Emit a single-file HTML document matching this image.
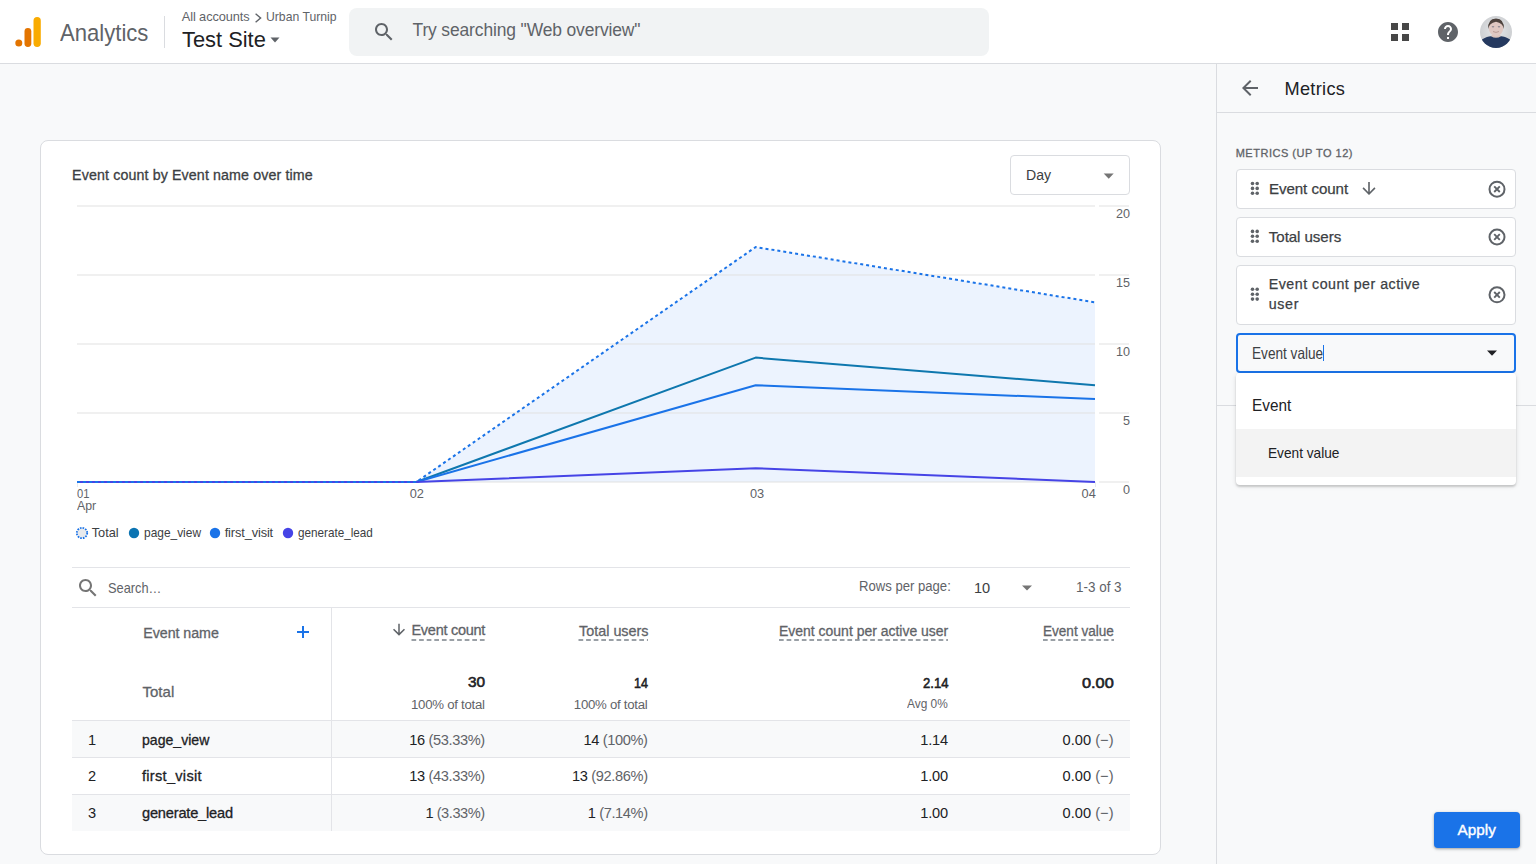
<!DOCTYPE html>
<html><head><meta charset="utf-8"><title>Analytics</title>
<style>
html,body{margin:0;padding:0;width:1536px;height:864px;overflow:hidden;background:#f8f9fa;font-family:"Liberation Sans",sans-serif;}
.a{position:absolute;box-sizing:border-box}
.t{position:absolute;line-height:1;white-space:pre;font-family:"Liberation Sans",sans-serif}
svg{position:absolute;left:0;top:0}
</style></head><body>
<!-- header -->
<div class="a" style="left:0;top:0;width:1536px;height:64px;background:#fff;border-bottom:1px solid #dadce0"></div>
<div class="a" style="left:164px;top:16px;width:1px;height:32px;background:#dadce0"></div>
<div class="a" style="left:349px;top:8px;width:640px;height:48px;background:#f1f3f4;border-radius:8px"></div>

<!-- chart card -->
<div class="a" style="left:40px;top:140px;width:1121px;height:715px;background:#fff;border:1px solid #dadce0;border-radius:8px"></div>
<div class="a" style="left:1010px;top:155px;width:120px;height:40px;border:1px solid #dadce0;border-radius:4px"></div>

<!-- table -->
<div class="a" style="left:72px;top:567px;width:1058px;height:1px;background:#e3e4e8"></div>
<div class="a" style="left:72px;top:607px;width:1058px;height:1px;background:#e3e4e8"></div>
<div class="a" style="left:72px;top:720px;width:1058px;height:1px;background:#e3e4e8"></div>
<div class="a" style="left:72px;top:721px;width:1058px;height:36px;background:#f8f9fa"></div>
<div class="a" style="left:72px;top:757px;width:1058px;height:1px;background:#e3e4e8"></div>
<div class="a" style="left:72px;top:794px;width:1058px;height:1px;background:#e3e4e8"></div>
<div class="a" style="left:72px;top:795px;width:1058px;height:36px;background:#f8f9fa"></div>
<div class="a" style="left:331px;top:608px;width:1px;height:223px;background:#e3e4e8"></div>

<!-- right panel -->
<div class="a" style="left:1216px;top:64px;width:320px;height:800px;background:#f8f9fa;border-left:1px solid #dadce0"></div>
<div class="a" style="left:1217px;top:112px;width:319px;height:1px;background:#dadce0"></div>
<div class="a" style="left:1217px;top:405px;width:319px;height:1px;background:#dadce0"></div>
<div class="a" style="left:1236px;top:169px;width:280px;height:40px;background:#fff;border:1px solid #dadce0;border-radius:4px"></div>
<div class="a" style="left:1236px;top:217px;width:280px;height:40px;background:#fff;border:1px solid #dadce0;border-radius:4px"></div>
<div class="a" style="left:1236px;top:265px;width:280px;height:60px;background:#fff;border:1px solid #dadce0;border-radius:4px"></div>
<div class="a" style="left:1236px;top:333px;width:280px;height:40px;background:#f8f9fa;border:2px solid #1a73e8;border-radius:4px"></div>
<div class="a" style="left:1236px;top:373px;width:280px;height:112px;background:#fff;border-radius:4px;box-shadow:0 2px 2px rgba(0,0,0,.14),0 1px 5px rgba(0,0,0,.12)"></div>
<div class="a" style="left:1236px;top:429px;width:280px;height:48px;background:#f3f3f3"></div>
<div class="a" style="left:1323px;top:345px;width:1px;height:16px;background:#1a73e8"></div>
<div class="a" style="left:1434px;top:812px;width:86px;height:36px;background:#1a73e8;border-radius:4px;box-shadow:0 1px 2px rgba(60,64,67,.3),0 1px 3px 1px rgba(60,64,67,.15)"></div>

<svg width="1536" height="864" viewBox="0 0 1536 864">
<rect x="33.5" y="17" width="7.3" height="30" rx="3.65" fill="#f9ab00"/>
<rect x="24.5" y="28" width="6.8" height="19" rx="3.4" fill="#e37400"/>
<circle cx="18.8" cy="43" r="3.5" fill="#e37400"/>
<polyline points="255.6,13.8 260.6,18 255.6,22.3" fill="none" stroke="#5f6368" stroke-width="1.4"/>
<polygon points="270.5,37.5 279.5,37.5 275,42.5" fill="#5f6368"/>
<g transform="translate(372,20)" fill="#5f6368"><path d="M15.5 14h-.79l-.28-.27C15.41 12.59 16 11.11 16 9.5 16 5.91 13.09 3 9.5 3S3 5.91 3 9.5 5.91 16 9.5 16c1.61 0 3.09-.59 4.23-1.57l.27.28v.79l5 4.99L20.49 19l-4.99-5zm-6 0C7.01 14 5 11.99 5 9.5S7.01 5 9.5 5 14 7.01 14 9.5 11.99 14 9.5 14z"/></g>
<g fill="#474747"><rect x="1391" y="23" width="7" height="7"/><rect x="1402" y="23" width="7" height="7"/><rect x="1391" y="34" width="7" height="7"/><rect x="1402" y="34" width="7" height="7"/></g>
<g transform="translate(1436,20)" fill="#5f6368"><path d="M12 2C6.48 2 2 6.48 2 12s4.48 10 10 10 10-4.48 10-10S17.52 2 12 2zm1 17h-2v-2h2v2zm2.07-7.75l-.9.92C13.45 12.9 13 13.5 13 15h-2v-.5c0-1.1.45-2.1 1.17-2.830l1.24-1.26c.37-.36.59-.86.59-1.410 0-1.1-.9-2-2-2s-2 .9-2 2H8c0-2.21 1.79-4 4-4s4 1.79 4 4c0 .88-.36 1.68-.93 2.25z"/></g>
<defs><clipPath id="av"><circle cx="1496" cy="32" r="16"/></clipPath>
<radialGradient id="avbg" cx="0.5" cy="0.45" r="0.6"><stop offset="0" stop-color="#e6e8ea"/><stop offset="1" stop-color="#c9cbce"/></radialGradient></defs>
<g clip-path="url(#av)">
<rect x="1480" y="16" width="32" height="32" fill="url(#avbg)"/>
<path d="M1491.5 35 h9 v5 h-9z" fill="#dcc3bb"/>
<ellipse cx="1496" cy="28" rx="7.3" ry="8.3" fill="#e0c8c2"/>
<path d="M1488.3 29 q-1-10 7.7-10.5 q8.7 0.5 7.7 10.5 q-0.6-6-7.7-7.2 q-7.1 1.2-7.7 7.2z" fill="#4e433e"/>
<ellipse cx="1493" cy="26.8" rx="1.3" ry="0.8" fill="#8f8a95"/>
<ellipse cx="1499" cy="26.8" rx="1.3" ry="0.8" fill="#8f8a95"/>
<path d="M1493 31.5 q3 1.8 6 0" stroke="#b08e88" stroke-width="0.8" fill="none"/>
<path d="M1480 50 L1482 39.5 q6-3.5 9-3.3 q5 3 10 0 q3 -0.2 9 3.3 L1512 50z" fill="#25395f"/>
</g>
<line x1="77.5" y1="482" x2="77.5" y2="487" stroke="#e8eaed"/>
<line x1="1095.5" y1="482" x2="1095.5" y2="487" stroke="#e8eaed"/>
<polygon points="77.00,482.00 416.33,482.00 755.67,247.06 1095.00,302.34 1095,482.00 77,482.00" fill="#ecf3fe"/>
<g stroke="#e1e1e1" stroke-width="1"><line x1="77" y1="206.0" x2="1095" y2="206.0"/><line x1="1099" y1="206.0" x2="1129" y2="206.0"/><line x1="77" y1="275.0" x2="1095" y2="275.0"/><line x1="1099" y1="275.0" x2="1129" y2="275.0"/><line x1="77" y1="344.0" x2="1095" y2="344.0"/><line x1="1099" y1="344.0" x2="1129" y2="344.0"/><line x1="77" y1="413.0" x2="1095" y2="413.0"/><line x1="1099" y1="413.0" x2="1129" y2="413.0"/><line x1="77" y1="482.0" x2="1095" y2="482.0"/><line x1="1099" y1="482.0" x2="1129" y2="482.0"/></g>
<g fill="none" stroke-width="2" stroke-linejoin="round">
<polyline points="77.00,482.00 416.33,482.00 755.67,357.62 1095.00,385.26" stroke="#0e77ae"/>
<polyline points="77.00,482.00 416.33,482.00 755.67,385.26 1095.00,399.08" stroke="#1a73e8"/>
<polyline points="77.00,482.00 416.33,482.00 755.67,468.18 1095.00,482.00" stroke="#4644e6"/>
<polyline points="77.00,482.00 416.33,482.00 755.67,247.06 1095.00,302.34" stroke="#1a73e8" stroke-dasharray="3 3"/>
</g>
<circle cx="82" cy="533" r="5.2" fill="#e8eaed" stroke="#1a73e8" stroke-width="1.8" stroke-dasharray="1.6 1.12"/>
<circle cx="134" cy="533" r="5.2" fill="#0b74b2"/>
<circle cx="215" cy="533" r="5.2" fill="#1a73e8"/>
<circle cx="288" cy="533" r="5.2" fill="#4644e6"/>
<polygon points="1103.7,173.5 1113.7,173.5 1108.7,178.7" fill="#757575"/>
<g transform="translate(76,576)" fill="#757575"><path d="M15.5 14h-.79l-.28-.27C15.41 12.59 16 11.11 16 9.5 16 5.91 13.09 3 9.5 3S3 5.91 3 9.5 5.91 16 9.5 16c1.61 0 3.09-.59 4.23-1.57l.27.28v.79l5 4.99L20.49 19l-4.99-5zm-6 0C7.01 14 5 11.99 5 9.5S7.01 5 9.5 5 14 7.01 14 9.5 11.99 14 9.5 14z"/></g>
<polygon points="1022,585.5 1032,585.5 1027,590.5" fill="#757575"/>
<path d="M297 632 h12 M303 626 v12" stroke="#1a73e8" stroke-width="2"/>
<g transform="translate(390,620.7) scale(0.75)" fill="#5f6368"><path d="M20 12l-1.41-1.41L13 16.17V4h-2v12.17l-5.58-5.59L4 12l8 8 8-8z"/></g>
<g stroke="#9aa0a6" stroke-width="2" stroke-dasharray="4.7 2.9">
<line x1="411.5" y1="640" x2="485" y2="640"/>
<line x1="578.5" y1="640" x2="648" y2="640"/>
<line x1="779" y1="640" x2="948" y2="640"/>
<line x1="1043" y1="640" x2="1114" y2="640"/>
</g>
<g transform="translate(1238,76)" fill="#5f6368"><path d="M20 11H7.83l5.59-5.59L12 4l-8 8 8 8 1.41-1.41L7.83 13H20v-2z"/></g>
<g fill="#5f6368"><circle cx="1252.5" cy="183.5" r="1.8"/><circle cx="1252.5" cy="188.4" r="1.8"/><circle cx="1252.5" cy="193.3" r="1.8"/><circle cx="1257.2" cy="183.5" r="1.8"/><circle cx="1257.2" cy="188.4" r="1.8"/><circle cx="1257.2" cy="193.3" r="1.8"/><circle cx="1252.5" cy="231.4" r="1.8"/><circle cx="1252.5" cy="236.3" r="1.8"/><circle cx="1252.5" cy="241.2" r="1.8"/><circle cx="1257.2" cy="231.4" r="1.8"/><circle cx="1257.2" cy="236.3" r="1.8"/><circle cx="1257.2" cy="241.2" r="1.8"/><circle cx="1252.5" cy="289.3" r="1.8"/><circle cx="1252.5" cy="294.2" r="1.8"/><circle cx="1252.5" cy="299.1" r="1.8"/><circle cx="1257.2" cy="289.3" r="1.8"/><circle cx="1257.2" cy="294.2" r="1.8"/><circle cx="1257.2" cy="299.1" r="1.8"/></g>
<g transform="translate(1359.25,178.75) scale(0.8125)" fill="#5f6368"><path d="M20 12l-1.41-1.41L13 16.17V4h-2v12.17l-5.58-5.59L4 12l8 8 8-8z"/></g>
<circle cx="1497" cy="189.2" r="7.5" fill="none" stroke="#5f6368" stroke-width="2"/><path d="M1494.2 186.4 l5.6 5.6 M1499.8 186.4 l-5.6 5.6" stroke="#5f6368" stroke-width="1.9" fill="none"/><circle cx="1497" cy="237" r="7.5" fill="none" stroke="#5f6368" stroke-width="2"/><path d="M1494.2 234.2 l5.6 5.6 M1499.8 234.2 l-5.6 5.6" stroke="#5f6368" stroke-width="1.9" fill="none"/><circle cx="1497" cy="294.8" r="7.5" fill="none" stroke="#5f6368" stroke-width="2"/><path d="M1494.2 292.0 l5.6 5.6 M1499.8 292.0 l-5.6 5.6" stroke="#5f6368" stroke-width="1.9" fill="none"/>
<polygon points="1487,350.5 1497,350.5 1492,355.7" fill="#202124"/>
</svg>
<div class='t' style='left:60.10px;top:21.56px;font-size:23.26px;color:#5f6368;transform:scaleX(0.9501);transform-origin:0 0'>Analytics</div>
<div class='t' style='left:181.70px;top:11.22px;font-size:12.79px;color:#5f6368;letter-spacing:-0.084px'>All accounts</div>
<div class='t' style='left:266.00px;top:11.22px;font-size:12.79px;color:#5f6368;transform:scaleX(0.9541);transform-origin:0 0'>Urban Turnip</div>
<div class='t' style='left:181.90px;top:28.16px;font-size:22.67px;color:#202124;transform:scaleX(0.9644);transform-origin:0 0'>Test Site</div>
<div class='t' style='left:412.50px;top:22.19px;font-size:17.44px;color:#5f6368;letter-spacing:-0.126px'>Try searching &quot;Web overview&quot;</div>
<div class='t' style='left:72.10px;top:167.59px;font-size:14.24px;color:#3c4043;letter-spacing:0.117px;-webkit-text-stroke:0.3px #3c4043'>Event count by Event name over time</div>
<div class='t' style='left:1025.50px;top:167.70px;font-size:14.83px;color:#3c4043;transform:scaleX(0.9490);transform-origin:0 0'>Day</div>
<div class='t' style='left:1116.08px;top:208.45px;font-size:12.60px;color:#5f6368'>20</div>
<div class='t' style='left:1116.08px;top:277.45px;font-size:12.60px;color:#5f6368'>15</div>
<div class='t' style='left:1116.08px;top:346.45px;font-size:12.60px;color:#5f6368'>10</div>
<div class='t' style='left:1123.08px;top:415.45px;font-size:12.60px;color:#5f6368'>5</div>
<div class='t' style='left:1123.08px;top:484.45px;font-size:12.60px;color:#5f6368'>0</div>
<div class='t' style='left:77.10px;top:488.02px;font-size:12.79px;color:#5f6368;transform:scaleX(0.8721);transform-origin:0 0'>01</div>
<div class='t' style='left:77.10px;top:499.92px;font-size:12.79px;color:#5f6368;transform:scaleX(0.9653);transform-origin:0 0'>Apr</div>
<div class='t' style='left:409.80px;top:488.02px;font-size:12.79px;color:#5f6368;letter-spacing:-0.219px'>02</div>
<div class='t' style='left:750.00px;top:488.02px;font-size:12.79px;color:#5f6368;letter-spacing:-0.219px'>03</div>
<div class='t' style='left:1081.50px;top:488.02px;font-size:12.79px;color:#5f6368;letter-spacing:0.081px'>04</div>
<div class='t' style='left:91.70px;top:526.62px;font-size:12.79px;color:#3c4043'>Total</div>
<div class='t' style='left:143.50px;top:526.62px;font-size:12.79px;color:#3c4043;transform:scaleX(0.9325);transform-origin:0 0'>page_view</div>
<div class='t' style='left:224.70px;top:526.62px;font-size:12.79px;color:#3c4043;letter-spacing:-0.122px'>first_visit</div>
<div class='t' style='left:298.00px;top:526.62px;font-size:12.79px;color:#3c4043;transform:scaleX(0.9152);transform-origin:0 0'>generate_lead</div>
<div class='t' style='left:107.60px;top:580.25px;font-size:15.12px;color:#5f6368;transform:scaleX(0.8478);transform-origin:0 0'>Search…</div>
<div class='t' style='left:859.00px;top:579.19px;font-size:14.24px;color:#5f6368;transform:scaleX(0.9207);transform-origin:0 0'>Rows per page:</div>
<div class='t' style='left:974.30px;top:580.03px;font-size:15.26px;color:#3c4043;transform:scaleX(0.9547);transform-origin:0 0'>10</div>
<div class='t' style='left:1076.14px;top:579.79px;font-size:14.24px;color:#5f6368;transform:scaleX(0.9445);transform-origin:0 0'>1-3 of 3</div>
<div class='t' style='left:143.30px;top:625.79px;font-size:14.24px;color:#5f6368;letter-spacing:-0.047px;-webkit-text-stroke:0.3px #5f6368'>Event name</div>
<div class='t' style='left:411.45px;top:623.35px;font-size:14.53px;color:#5f6368;letter-spacing:-0.272px;-webkit-text-stroke:0.3px #5f6368'>Event count</div>
<div class='t' style='left:578.80px;top:622.85px;font-size:15.12px;color:#5f6368;-webkit-text-stroke:0.3px #5f6368;transform:scaleX(0.9519);transform-origin:0 0'>Total users</div>
<div class='t' style='left:778.80px;top:623.62px;font-size:14.68px;color:#5f6368;-webkit-text-stroke:0.3px #5f6368;transform:scaleX(0.9519);transform-origin:0 0'>Event count per active user</div>
<div class='t' style='left:1042.87px;top:623.62px;font-size:14.68px;color:#5f6368;-webkit-text-stroke:0.3px #5f6368;transform:scaleX(0.9241);transform-origin:0 0'>Event value</div>
<div class='t' style='left:142.40px;top:684.68px;font-size:14.97px;color:#5f6368;letter-spacing:0.056px;-webkit-text-stroke:0.3px #5f6368'>Total</div>
<div class='t' style='left:468.43px;top:675.84px;font-size:13.95px;color:#202124;-webkit-text-stroke:0.55px #202124;transform:scaleX(1.1005);transform-origin:0 0'>30</div>
<div class='t' style='left:633.81px;top:675.69px;font-size:14.24px;color:#202124;-webkit-text-stroke:0.55px #202124;transform:scaleX(0.8821);transform-origin:0 0'>14</div>
<div class='t' style='left:922.54px;top:675.99px;font-size:14.24px;color:#202124;-webkit-text-stroke:0.55px #202124;transform:scaleX(0.9191);transform-origin:0 0'>2.14</div>
<div class='t' style='left:1082.17px;top:675.99px;font-size:14.24px;color:#202124;-webkit-text-stroke:0.55px #202124;transform:scaleX(1.1463);transform-origin:0 0'>0.00</div>
<div class='t' style='left:411.00px;top:697.95px;font-size:13.23px;color:#5f6368;letter-spacing:-0.264px'>100% of total</div>
<div class='t' style='left:573.80px;top:697.95px;font-size:13.23px;color:#5f6368;letter-spacing:-0.273px'>100% of total</div>
<div class='t' style='left:907.23px;top:698.42px;font-size:12.79px;color:#5f6368;transform:scaleX(0.9309);transform-origin:0 0'>Avg 0%</div>
<div class='t' style='left:88.00px;top:732.94px;font-size:14.60px;color:#202124'>1</div>
<div class='t' style='left:142.00px;top:732.94px;font-size:14.60px;color:#202124;-webkit-text-stroke:0.3px #202124;transform:scaleX(0.9652);transform-origin:0 0'>page_view</div>
<div class='t' style='left:409.20px;top:732.94px;font-size:14.60px;letter-spacing:-0.352px'><span style='color:#202124'>16</span><span style='color:#5f6368'> (53.33%)</span></div>
<div class='t' style='left:583.40px;top:732.94px;font-size:14.60px;letter-spacing:-0.343px'><span style='color:#202124'>14</span><span style='color:#5f6368'> (100%)</span></div>
<div class='t' style='left:920.20px;top:732.94px;font-size:14.60px;color:#202124;letter-spacing:-0.169px'>1.14</div>
<div class='t' style='left:1062.50px;top:732.94px;font-size:14.60px;letter-spacing:0.042px'><span style='color:#202124'>0.00</span><span style='color:#5f6368'> (−)</span></div>
<div class='t' style='left:88.00px;top:769.34px;font-size:14.60px;color:#202124'>2</div>
<div class='t' style='left:142.00px;top:769.34px;font-size:14.60px;color:#202124;letter-spacing:0.278px;-webkit-text-stroke:0.3px #202124'>first_visit</div>
<div class='t' style='left:409.20px;top:769.34px;font-size:14.60px;letter-spacing:-0.352px'><span style='color:#202124'>13</span><span style='color:#5f6368'> (43.33%)</span></div>
<div class='t' style='left:572.00px;top:769.34px;font-size:14.60px;letter-spacing:-0.352px'><span style='color:#202124'>13</span><span style='color:#5f6368'> (92.86%)</span></div>
<div class='t' style='left:920.20px;top:769.34px;font-size:14.60px;color:#202124;letter-spacing:-0.169px'>1.00</div>
<div class='t' style='left:1062.50px;top:769.34px;font-size:14.60px;letter-spacing:0.042px'><span style='color:#202124'>0.00</span><span style='color:#5f6368'> (−)</span></div>
<div class='t' style='left:88.00px;top:805.94px;font-size:14.60px;color:#202124'>3</div>
<div class='t' style='left:142.00px;top:805.94px;font-size:14.60px;color:#202124;letter-spacing:-0.190px;-webkit-text-stroke:0.3px #202124'>generate_lead</div>
<div class='t' style='left:425.40px;top:805.94px;font-size:14.60px;letter-spacing:-0.435px'><span style='color:#202124'>1</span><span style='color:#5f6368'> (3.33%)</span></div>
<div class='t' style='left:587.80px;top:805.94px;font-size:14.60px;letter-spacing:-0.385px'><span style='color:#202124'>1</span><span style='color:#5f6368'> (7.14%)</span></div>
<div class='t' style='left:920.20px;top:805.94px;font-size:14.60px;color:#202124;letter-spacing:-0.169px'>1.00</div>
<div class='t' style='left:1062.50px;top:805.94px;font-size:14.60px;letter-spacing:0.042px'><span style='color:#202124'>0.00</span><span style='color:#5f6368'> (−)</span></div>
<div class='t' style='left:1284.50px;top:79.57px;font-size:18.17px;color:#202124;letter-spacing:0.314px'>Metrics</div>
<div class='t' style='left:1235.70px;top:147.61px;font-size:11.00px;color:#5f6368;letter-spacing:0.509px;-webkit-text-stroke:0.3px #5f6368'>METRICS (UP TO 12)</div>
<div class='t' style='left:1268.90px;top:181.45px;font-size:15.12px;color:#3c4043;letter-spacing:-0.057px;-webkit-text-stroke:0.25px #3c4043'>Event count</div>
<div class='t' style='left:1268.80px;top:229.25px;font-size:15.12px;color:#3c4043;letter-spacing:-0.064px;-webkit-text-stroke:0.25px #3c4043'>Total users</div>
<div class='t' style='left:1268.80px;top:277.29px;font-size:14.24px;color:#3c4043;letter-spacing:0.480px;-webkit-text-stroke:0.25px #3c4043'>Event count per active</div>
<div class='t' style='left:1268.80px;top:297.29px;font-size:14.25px;color:#3c4043;letter-spacing:0.630px;-webkit-text-stroke:0.25px #3c4043'>user</div>
<div class='t' style='left:1252.00px;top:346.00px;font-size:16.72px;color:#3c4043;transform:scaleX(0.8156);transform-origin:0 0'>Event value</div>
<div class='t' style='left:1252.10px;top:397.98px;font-size:16.86px;color:#202124;transform:scaleX(0.9090);transform-origin:0 0'>Event</div>
<div class='t' style='left:1268.10px;top:445.31px;font-size:15.41px;color:#202124;transform:scaleX(0.8876);transform-origin:0 0'>Event value</div>
<div class='t' style='left:1457.50px;top:822.03px;font-size:15.26px;color:#ffffff;letter-spacing:0.061px;-webkit-text-stroke:0.4px #ffffff'>Apply</div>
</body></html>
